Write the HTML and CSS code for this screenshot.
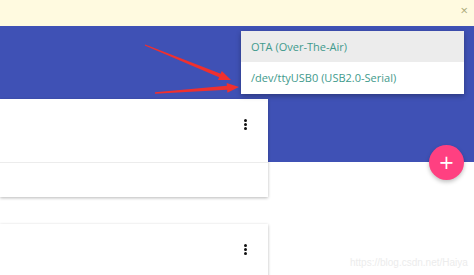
FILE: index.html
```html
<!DOCTYPE html>
<html>
<head>
<meta charset="utf-8">
<link rel="stylesheet" href="styles.css">
</head>
<body>
<div class="banner"><span class="close">×</span></div>
<div class="header"></div>
<main class="content">
  <section class="card">
    <div class="card-top"><span class="kebab"><i></i><i></i><i></i></span></div>
    <div class="card-bottom"></div>
  </section>
  <section class="card card-2">
    <div class="card-top"><span class="kebab"><i></i><i></i><i></i></span></div>
  </section>
</main>
<div class="menu">
  <div class="menu-item active">OTA (Over-The-Air)</div>
  <div class="menu-item">/dev/ttyUSB0 (USB2.0-Serial)</div>
</div>
<button class="fab">+</button>
<svg class="arrows" width="474" height="275" viewBox="0 0 474 275">
  <polygon points="145.2,44.5 220.7,73.7 221.8,70.9 231,80 218,80.1 219.1,77.3 144.8,45.5" fill="#f0302e"/>
  <polygon points="154.95,92.3 226.86,85.86 226.64,82.9 239,87 227.36,92.8 227.14,89.84 155.05,93.7" fill="#f0302e"/>
</svg>
<div class="watermark">https://blog.csdn.net/Haiya</div>
</body>
</html>
```
FILE: styles.css
```css
html, body {
  margin: 0;
  padding: 0;
  background: #ffffff;
  width: 474px;
  height: 275px;
  overflow: hidden;
  font-family: "Open Sans", "Noto Sans", sans-serif;
}
.banner {
  height: 26px;
  background: #fffae0;
  display: flex;
  justify-content: flex-end;
  align-items: center;
  padding-right: 6px;
}
.close {
  color: #a8a878;
  font-size: 13px;
  line-height: 1;
  margin-top: -6px;
}
.header {
  height: 136px;
  background: #3f51b5;
}
.content {
  margin-top: -63px;
  display: flex;
  flex-direction: column;
  gap: 27px;
}
.card {
  width: 268px;
  background: #fff;
  box-shadow: 0 1px 3px rgba(0,0,0,0.28);
  position: relative;
}
.card-top {
  height: 63px;
  display: flex;
  justify-content: flex-end;
  align-items: flex-start;
  padding-right: 21px;
}
.card-bottom {
  height: 34px;
  border-top: 1px solid #ececec;
}
.card-2 {
  height: 60px;
}
.kebab {
  display: flex;
  flex-direction: column;
  gap: 1px;
  margin-top: 20px;
}
.kebab i {
  width: 3px;
  height: 3px;
  border-radius: 50%;
  background: #111;
  display: block;
}
.menu {
  position: absolute;
  left: 241px;
  top: 31px;
  width: 223px;
  background: #fff;
  box-shadow: 0 2px 5px rgba(0,0,0,0.3);
}
.menu-item {
  height: 31px;
  line-height: 31px;
  padding-left: 10px;
  font-size: 11px;
  color: #3f9a8c;
}
.menu-item + .menu-item {
  height: 32px;
  line-height: 32px;
}
.menu-item.active {
  background: #ececec;
}
.fab {
  position: absolute;
  left: 429px;
  top: 145px;
  width: 35px;
  height: 35px;
  border-radius: 50%;
  border: none;
  background: #ff4081;
  color: #fff;
  font-size: 19px;
  line-height: 35px;
  padding: 0;
  font-family: "DejaVu Sans", sans-serif;
  box-shadow: 0 2px 4px rgba(0,0,0,0.25);
}
.arrows {
  position: absolute;
  left: 0;
  top: 0;
  pointer-events: none;
}
.watermark {
  position: absolute;
  left: 350px;
  top: 257px;
  font-family: "Liberation Sans", sans-serif;
  font-size: 10px;
  color: #ececec;
}
```
